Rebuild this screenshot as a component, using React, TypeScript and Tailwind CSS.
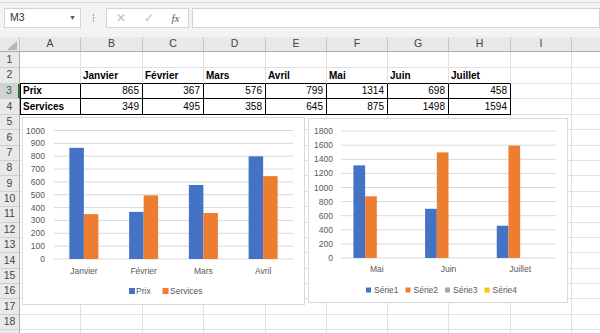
import React from "react";

const COL_W = [
  "w-[61px]",
  "w-[62px]",
  "w-[61px]",
  "w-[62px]",
  "w-[61px]",
  "w-[61px]",
  "w-[61px]",
  "w-[62px]",
  "w-[61px]",
  "w-[40px]",
];
const COL_NAMES = ["A", "B", "C", "D", "E", "F", "G", "H", "I", ""];

const MONTHS = ["Janvier", "Février", "Mars", "Avril", "Mai", "Juin", "Juillet"];
const PRIX = [865, 367, 576, 799, 1314, 698, 458];
const SERVICES = [349, 495, 358, 645, 875, 1498, 1594];

const BLUE = "#4472C4";
const ORANGE = "#ED7D31";
const GRAY = "#A5A5A5";
const YELLOW = "#FFC000";

type CellProps = {
  col: number;
  row: number;
};

// contenu d'une cellule de la feuille
const cellContent = (row: number, col: number) => {
  if (row === 2 && col >= 1 && col <= 7) return { text: MONTHS[col - 1], bold: true, right: false };
  if (row === 3 && col === 0) return { text: "Prix", bold: true, right: false };
  if (row === 4 && col === 0) return { text: "Services", bold: true, right: false };
  if (row === 3 && col >= 1 && col <= 7) return { text: String(PRIX[col - 1]), bold: false, right: true };
  if (row === 4 && col >= 1 && col <= 7) return { text: String(SERVICES[col - 1]), bold: false, right: true };
  return null;
};

const Cell = ({ col, row }: CellProps) => {
  const c = cellContent(row, col);
  const inTable = (row === 3 || row === 4) && col <= 7;
  const aboveTable = row === 2 && col <= 7;
  const right = inTable ? "border-r-black" : "border-r-[#e1e1e1]";
  const bottom = inTable || aboveTable ? "border-b-black" : "border-b-[#e1e1e1]";
  return (
    <div
      className={`${COL_W[col]} shrink-0 h-full border-r border-b ${right} ${bottom} flex items-center overflow-hidden whitespace-nowrap px-[2px] ${
        c && c.right ? "justify-end pr-[3px]" : ""
      } ${inTable && col === 0 ? "border-l border-l-black" : ""}`}
    >
      {c && <span className={c.bold ? "font-bold" : ""}>{c.text}</span>}
    </div>
  );
};

const Row = ({ n }: { n: number }) => {
  const selected = n === 3;
  return (
    <div className={`flex ${n <= 4 ? "h-[15.75px]" : "h-[15.36px]"}`}>
      <div
        className={`w-[20px] shrink-0 h-full flex items-center justify-center border-b border-b-[#cfcfcf] text-[10.5px] ${
          selected
            ? "bg-[#d2d2d2] text-[#217346] border-r-2 border-r-[#217346]"
            : "bg-[#e9e9e9] text-[#444] border-r border-r-[#ababab]"
        }`}
      >
        {n <= 18 ? n : ""}
      </div>
      {COL_W.map((_, i) => (
        <Cell key={i} col={i} row={n} />
      ))}
    </div>
  );
};

const ChartOne = () => {
  const yOf = (v: number) => 141 - v * 0.1285;
  const centers = [0, 1, 2, 3].map((i) => 31 + 29.875 * (2 * i + 1));
  const ticks = [0, 100, 200, 300, 400, 500, 600, 700, 800, 900, 1000];
  return (
    <svg width={283} height={188} className="font-['Liberation_Sans',sans-serif]" fontSize={8.5} fill="#595959">
      {ticks.map((t) => (
        <g key={t}>
          <line x1={31} x2={270} y1={yOf(t)} y2={yOf(t)} stroke="#d9d9d9" strokeWidth={1} />
          <text x={22} y={yOf(t) + 3} textAnchor="end">
            {t}
          </text>
        </g>
      ))}
      {centers.map((c, i) => (
        <g key={i}>
          <rect x={c - 14.5} y={yOf(PRIX[i])} width={14.5} height={PRIX[i] * 0.1285} fill={BLUE} />
          <rect x={c} y={yOf(SERVICES[i])} width={14.5} height={SERVICES[i] * 0.1285} fill={ORANGE} />
          <text x={c} y={155.5} textAnchor="middle">
            {MONTHS[i]}
          </text>
        </g>
      ))}
      <rect x={106} y={170} width={6} height={6} fill={BLUE} />
      <text x={113} y={176}>
        Prix
      </text>
      <rect x={139.5} y={170} width={6} height={6} fill={ORANGE} />
      <text x={147} y={176}>
        Services
      </text>
    </svg>
  );
};

const ChartTwo = () => {
  const yOf = (v: number) => 139 - v * 0.0705;
  const centers = [0, 1, 2].map((i) => 32 + 35.83 * (2 * i + 1));
  const ticks = [0, 200, 400, 600, 800, 1000, 1200, 1400, 1600, 1800];
  const legend = [
    { name: "Série1", color: BLUE },
    { name: "Série2", color: ORANGE },
    { name: "Série3", color: GRAY },
    { name: "Série4", color: YELLOW },
  ];
  return (
    <svg width={260} height={185} className="font-['Liberation_Sans',sans-serif]" fontSize={8.5} fill="#595959">
      {ticks.map((t) => (
        <g key={t}>
          <line x1={32} x2={247} y1={yOf(t)} y2={yOf(t)} stroke="#d9d9d9" strokeWidth={1} />
          <text x={24} y={yOf(t) + 3} textAnchor="end">
            {t}
          </text>
        </g>
      ))}
      {centers.map((c, i) => (
        <g key={i}>
          <rect x={c - 23.4} y={yOf(PRIX[i + 4])} width={11.7} height={PRIX[i + 4] * 0.0705} fill={BLUE} />
          <rect x={c - 11.7} y={yOf(SERVICES[i + 4])} width={11.7} height={SERVICES[i + 4] * 0.0705} fill={ORANGE} />
          <text x={c} y={152.5} textAnchor="middle">
            {MONTHS[i + 4]}
          </text>
        </g>
      ))}
      {legend.map((l, i) => (
        <g key={l.name}>
          <rect x={57 + 39.5 * i} y={168.5} width={5} height={5} fill={l.color} />
          <text x={65 + 39.5 * i} y={173.5}>
            {l.name}
          </text>
        </g>
      ))}
    </svg>
  );
};

const App = () => {
  return (
    <div className="relative w-[600px] h-[333px] overflow-hidden bg-white font-['Liberation_Sans',sans-serif] text-[10px] text-black">
      {/* barre de formule */}
      <div className="h-[37px] bg-[#f3f3f3] flex flex-col">
        <div className="h-[3px] border-b border-b-[#d9d9d9]" />
        <div className="flex items-start pt-[5px]">
          <div className="ml-[4px] w-[77px] h-[20px] bg-white border border-[#d4d4d4] flex items-center justify-between pl-[5px] pr-[4px] text-[#333] text-[10.5px]">
            <span>M3</span>
            <span className="text-[7px] text-[#555]">▼</span>
          </div>
          <div className="w-[25px] h-[20px] flex flex-col items-center justify-center gap-[1.5px]">
            <span className="w-[1.5px] h-[1.5px] bg-[#a0a0a0]" />
            <span className="w-[1.5px] h-[1.5px] bg-[#a0a0a0]" />
            <span className="w-[1.5px] h-[1.5px] bg-[#a0a0a0]" />
          </div>
          <div className="w-[83px] h-[20px] bg-white border border-[#d4d4d4] flex items-center">
            <span className="w-[28px] text-center text-[#bdbdbd] text-[12px] leading-none">✕</span>
            <span className="w-[28px] text-center text-[#bdbdbd] text-[12px] leading-none">✓</span>
            <span className="w-[25px] text-center text-[#555] italic font-['Liberation_Serif',serif] text-[11px]">fx</span>
          </div>
          <div className="ml-[3px] flex-1 h-[20px] bg-white border border-[#d4d4d4]" />
        </div>
      </div>

      {/* en-têtes de colonnes */}
      <div className="flex h-[15px] bg-[#e9e9e9] border-b border-b-[#ababab] text-[#444] text-[10.5px]">
        <div className="w-[20px] shrink-0 h-full border-r border-r-[#c6c6c6] relative">
          <div className="absolute right-[2px] bottom-[1px] w-0 h-0 border-l-[10px] border-l-transparent border-b-[9px] border-b-[#b7b7b7]" />
        </div>
        {COL_W.map((w, i) => (
          <div key={i} className={`${w} shrink-0 h-full flex items-center justify-center border-r border-r-[#c6c6c6]`}>
            {COL_NAMES[i]}
          </div>
        ))}
      </div>

      {/* lignes */}
      <div>
        {Array.from({ length: 19 }, (_, i) => (
          <Row key={i} n={i + 1} />
        ))}
      </div>

      {/* graphiques */}
      <div className="absolute left-[22px] top-[117px] w-[283px] h-[188px] bg-white border border-[#d9d9d9]">
        <ChartOne />
      </div>
      <div className="absolute left-[308px] top-[118px] w-[260px] h-[185px] bg-white border border-[#d9d9d9]">
        <ChartTwo />
      </div>
    </div>
  );
};

export default App;
